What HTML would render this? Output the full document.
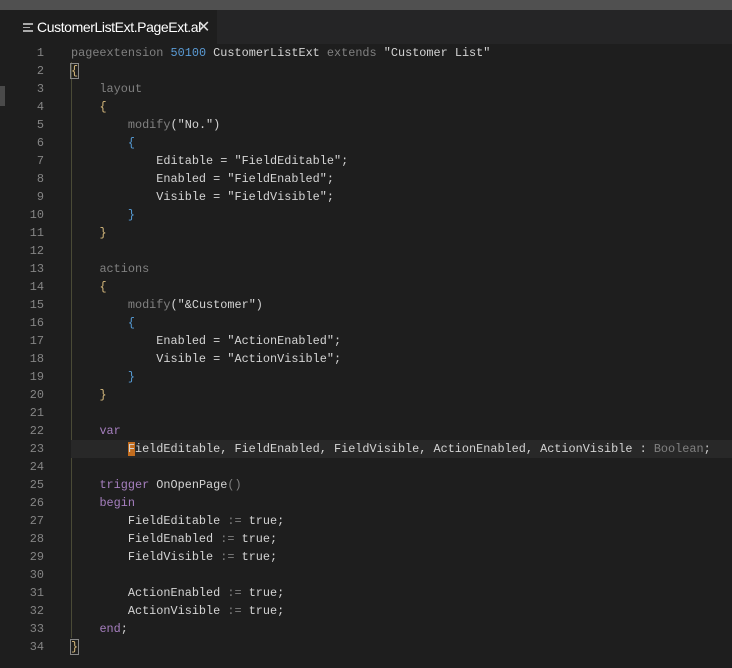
<!DOCTYPE html><html><head><style>
body{margin:0;width:732px;height:668px;background:#1e1e1e;overflow:hidden;font-family:"Liberation Mono",monospace;position:relative}
#top{position:absolute;left:0;top:0;width:732px;height:10px;background:#505050}
#tabs{position:absolute;left:0;top:10px;width:732px;height:34px;background:#252526}
#tab{position:absolute;left:0;top:0;width:217px;height:34px;background:#1e1e1e;color:#fff;font:14px "Liberation Sans",sans-serif;letter-spacing:-0.4px}
#tab .t{position:absolute;left:37px;top:9px}
#tab .x{position:absolute;left:197px;top:7px;font-size:16px;color:#ddd}
#tab .ic{position:absolute;left:23px;top:13px;width:10px}
#tab .ic i{display:block;height:1.5px;background:#aaa;margin-bottom:2px}
#code{position:absolute;left:0;top:44px;width:732px}
.l{height:18px;line-height:18px;font-size:11.85px;white-space:pre;position:relative;color:#d4d4d4}
.n{position:absolute;left:0;width:44px;text-align:right;color:#858585}
.c{position:absolute;left:71px}
.cur{background:#282828;margin-left:71px}
.cur .n{left:-71px}.cur .c{left:0}
.k{color:#808080}.p{color:#a67fbf}.num{color:#5a9bd5}.y{color:#d7ba7d}
.g{position:absolute;top:62px;width:1px;background:#404040}
</style></head><body>
<div id="top"></div>
<div id="tabs"><div id="tab"><div class="ic"><i></i><i style="width:7px"></i><i></i></div><span class="t">CustomerListExt.PageExt.al</span><span class="x">✕</span></div></div>
<div style="position:absolute;left:0;top:86px;width:5px;height:20px;background:#4a4a4a"></div>
<div class="g" style="left:71px;height:576px;background:#4a4a36"></div>
<div id="code">
<div class="l"><span class="n">1</span><span class="c"><span class="k">pageextension</span> <span class="num">50100</span> CustomerListExt <span class="k">extends</span> "Customer List"</span></div>
<div class="l"><span class="n">2</span><span class="c"><span class="y" style="outline:1px solid #888">{</span></span></div>
<div class="l"><span class="n">3</span><span class="c">    <span class="k">layout</span></span></div>
<div class="l"><span class="n">4</span><span class="c">    <span class="y">{</span></span></div>
<div class="l"><span class="n">5</span><span class="c">        <span class="k">modify</span>("No.")</span></div>
<div class="l"><span class="n">6</span><span class="c">        <span style="color:#569cd6">{</span></span></div>
<div class="l"><span class="n">7</span><span class="c">            Editable = "FieldEditable";</span></div>
<div class="l"><span class="n">8</span><span class="c">            Enabled = "FieldEnabled";</span></div>
<div class="l"><span class="n">9</span><span class="c">            Visible = "FieldVisible";</span></div>
<div class="l"><span class="n">10</span><span class="c">        <span style="color:#569cd6">}</span></span></div>
<div class="l"><span class="n">11</span><span class="c">    <span class="y">}</span></span></div>
<div class="l"><span class="n">12</span><span class="c"></span></div>
<div class="l"><span class="n">13</span><span class="c">    <span class="k">actions</span></span></div>
<div class="l"><span class="n">14</span><span class="c">    <span class="y">{</span></span></div>
<div class="l"><span class="n">15</span><span class="c">        <span class="k">modify</span>("&amp;Customer")</span></div>
<div class="l"><span class="n">16</span><span class="c">        <span style="color:#569cd6">{</span></span></div>
<div class="l"><span class="n">17</span><span class="c">            Enabled = "ActionEnabled";</span></div>
<div class="l"><span class="n">18</span><span class="c">            Visible = "ActionVisible";</span></div>
<div class="l"><span class="n">19</span><span class="c">        <span style="color:#569cd6">}</span></span></div>
<div class="l"><span class="n">20</span><span class="c">    <span class="y">}</span></span></div>
<div class="l"><span class="n">21</span><span class="c"></span></div>
<div class="l"><span class="n">22</span><span class="c">    <span class="p">var</span></span></div>
<div class="l cur"><span class="n">23</span><span class="c">        <span style="background:#c36d1f">F</span>ieldEditable, FieldEnabled, FieldVisible, ActionEnabled, ActionVisible : <span class="k">Boolean</span>;</span></div>
<div class="l"><span class="n">24</span><span class="c"></span></div>
<div class="l"><span class="n">25</span><span class="c">    <span class="p">trigger</span> OnOpenPage<span class="k">()</span></span></div>
<div class="l"><span class="n">26</span><span class="c">    <span class="p">begin</span></span></div>
<div class="l"><span class="n">27</span><span class="c">        FieldEditable <span class="k">:=</span> true;</span></div>
<div class="l"><span class="n">28</span><span class="c">        FieldEnabled <span class="k">:=</span> true;</span></div>
<div class="l"><span class="n">29</span><span class="c">        FieldVisible <span class="k">:=</span> true;</span></div>
<div class="l"><span class="n">30</span><span class="c"></span></div>
<div class="l"><span class="n">31</span><span class="c">        ActionEnabled <span class="k">:=</span> true;</span></div>
<div class="l"><span class="n">32</span><span class="c">        ActionVisible <span class="k">:=</span> true;</span></div>
<div class="l"><span class="n">33</span><span class="c">    <span class="p">end</span>;</span></div>
<div class="l"><span class="n">34</span><span class="c"><span class="y" style="outline:1px solid #888">}</span></span></div>
</div>
</body></html>
